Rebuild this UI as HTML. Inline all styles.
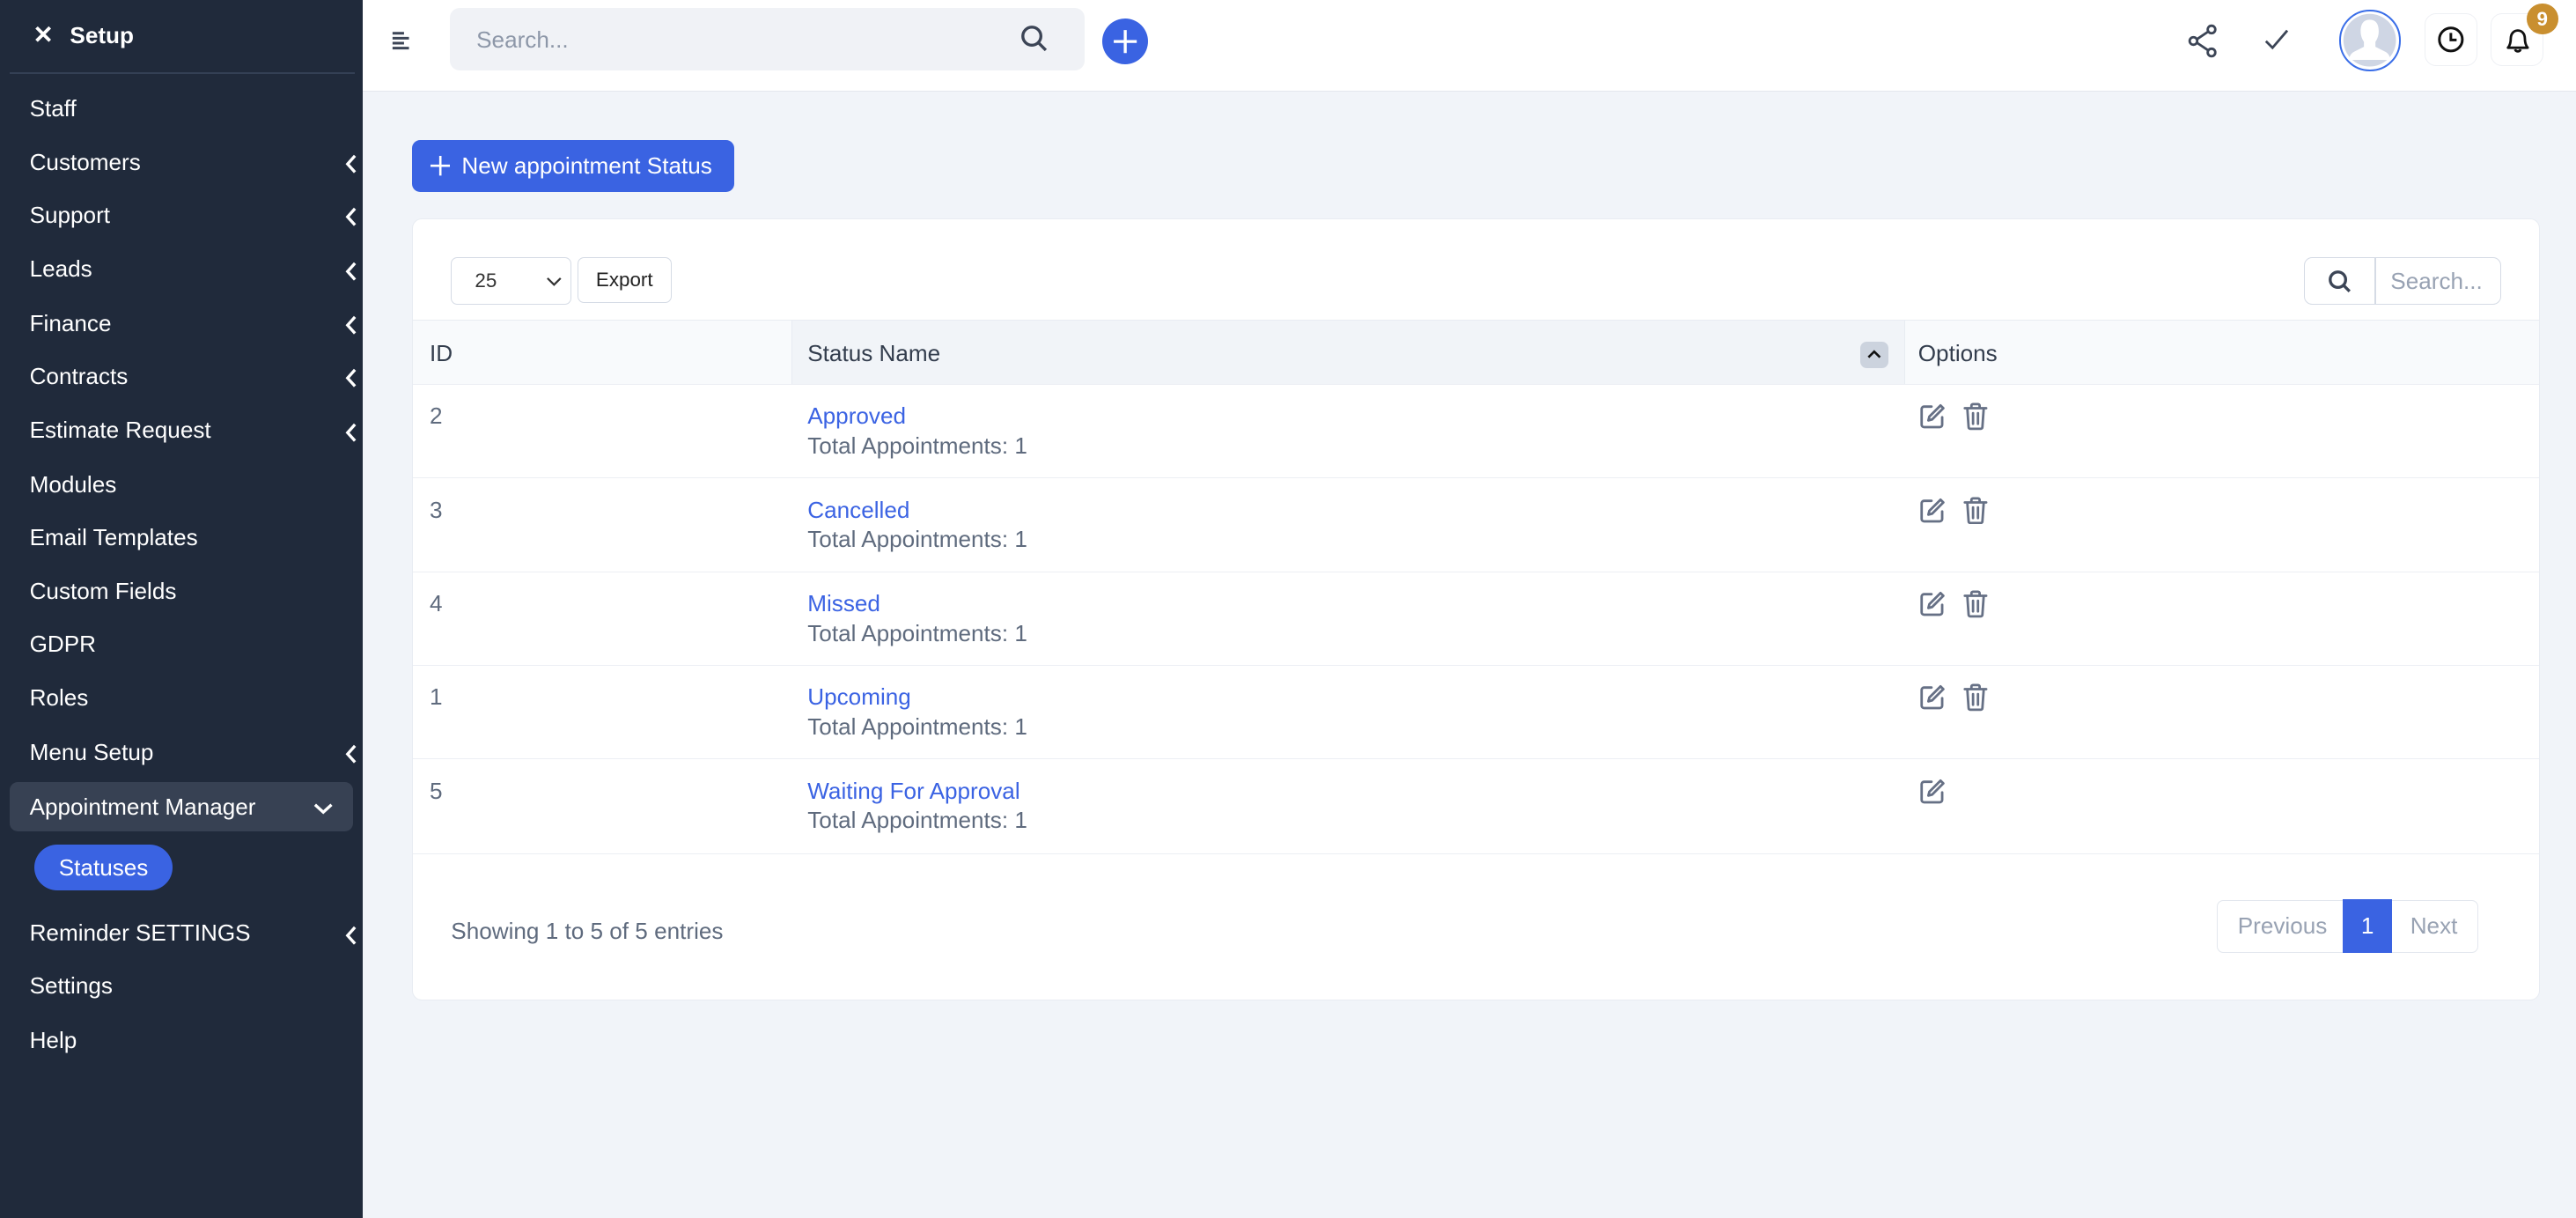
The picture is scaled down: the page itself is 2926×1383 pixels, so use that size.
<!DOCTYPE html>
<html><head><meta charset="utf-8">
<style>
html,body{margin:0;padding:0;}
body{width:2926px;height:1382px;overflow:hidden;background:#f1f4f9;font-family:"Liberation Sans",sans-serif;}
#z{zoom:1.8661;width:1568px;height:741px;position:relative;}
.abs{position:absolute;}
.sb{left:0;top:0;width:221px;height:741px;background:#202a3b;color:#fff;font-size:14px;}
.sb .it{position:absolute;left:18px;right:0;height:20px;line-height:20px;}
.sb .chev{position:absolute;left:192px;top:5px;}
.hdr{left:221px;top:0;right:0;height:55px;background:#fff;border-bottom:1px solid #e3e7ee;}
.card{left:251px;top:133px;width:1295px;height:476px;background:#fff;border-radius:6px;border:1px solid #e8ecf2;box-sizing:border-box;}
.row{position:absolute;left:0;right:0;height:57px;border-top:1px solid #eceff4;font-size:14px;color:#5f6b7e;}
.row .id{position:absolute;left:10px;top:11px;}
.row .nm{position:absolute;left:240px;top:11px;color:#3b63e3;}
.row .tot{position:absolute;left:240px;top:29px;}
.row .ic{position:absolute;left:916px;top:11px;}
</style></head><body><div id="z">

<div class="abs sb">
  <div class="it" style="top:11px;left:20px;font-weight:bold;"><span style="font-size:15px;margin-right:10px;">✕</span>Setup</div>
  <div style="position:absolute;left:6px;width:210px;top:44px;height:1px;background:#344055;"></div>
  <div class="it" style="top:56px">Staff</div>
  <div class="it" style="top:89px">Customers<svg class="chev" width="8" height="12" viewBox="0 0 8 12"><path d="M6 1L1.5 6L6 11" stroke="#fff" stroke-width="1.8" fill="none"/></svg></div>
  <div class="it" style="top:121px">Support<svg class="chev" width="8" height="12" viewBox="0 0 8 12"><path d="M6 1L1.5 6L6 11" stroke="#fff" stroke-width="1.8" fill="none"/></svg></div>
  <div class="it" style="top:154px">Leads<svg class="chev" width="8" height="12" viewBox="0 0 8 12"><path d="M6 1L1.5 6L6 11" stroke="#fff" stroke-width="1.8" fill="none"/></svg></div>
  <div class="it" style="top:187px">Finance<svg class="chev" width="8" height="12" viewBox="0 0 8 12"><path d="M6 1L1.5 6L6 11" stroke="#fff" stroke-width="1.8" fill="none"/></svg></div>
  <div class="it" style="top:219px">Contracts<svg class="chev" width="8" height="12" viewBox="0 0 8 12"><path d="M6 1L1.5 6L6 11" stroke="#fff" stroke-width="1.8" fill="none"/></svg></div>
  <div class="it" style="top:252px">Estimate Request<svg class="chev" width="8" height="12" viewBox="0 0 8 12"><path d="M6 1L1.5 6L6 11" stroke="#fff" stroke-width="1.8" fill="none"/></svg></div>
  <div class="it" style="top:285px">Modules</div>
  <div class="it" style="top:317px">Email Templates</div>
  <div class="it" style="top:350px">Custom Fields</div>
  <div class="it" style="top:382px">GDPR</div>
  <div class="it" style="top:415px">Roles</div>
  <div class="it" style="top:448px">Menu Setup<svg class="chev" width="8" height="12" viewBox="0 0 8 12"><path d="M6 1L1.5 6L6 11" stroke="#fff" stroke-width="1.8" fill="none"/></svg></div>
  <div style="position:absolute;left:6px;top:476px;width:209px;height:30px;background:#374153;border-radius:5px;"></div>
  <div class="it" style="top:481px">Appointment Manager<svg style="position:absolute;left:173px;top:7px" width="12" height="8" viewBox="0 0 12 8"><path d="M1 1.5L6 6L11 1.5" stroke="#fff" stroke-width="1.8" fill="none"/></svg></div>
  <div style="position:absolute;left:21px;top:514px;width:84px;height:28px;background:#3a63e2;border-radius:14px;text-align:center;line-height:28px;">Statuses</div>
  <div class="it" style="top:558px">Reminder SETTINGS<svg class="chev" width="8" height="12" viewBox="0 0 8 12"><path d="M6 1L1.5 6L6 11" stroke="#fff" stroke-width="1.8" fill="none"/></svg></div>
  <div class="it" style="top:590px">Settings</div>
  <div class="it" style="top:623px">Help</div>
</div>

<div class="abs hdr">
  <svg style="position:absolute;left:17px;top:19px" width="12" height="12" viewBox="0 0 12 12"><path d="M1 1.5h7M1 4.5h10M1 7.5h7M1 10.5h10" stroke="#3c4556" stroke-width="1.6"/></svg>
  <div style="position:absolute;left:53px;top:5px;width:386px;height:38px;background:#f0f2f6;border-radius:6px;">
    <span style="position:absolute;left:16px;top:11px;font-size:14px;color:#8d97a8;">Search...</span>
    <svg style="position:absolute;left:347px;top:10px" width="17" height="17" viewBox="0 0 17 17"><circle cx="7" cy="7" r="5.5" stroke="#3c4556" stroke-width="1.8" fill="none"/><path d="M11 11l4.5 4.5" stroke="#3c4556" stroke-width="1.8"/></svg>
  </div>
  <div style="position:absolute;left:450px;top:11px;width:28px;height:28px;border-radius:50%;background:#3a63e2;"><svg width="28" height="28" viewBox="0 0 28 28"><path d="M14 7v14M7 14h14" stroke="#fff" stroke-width="1.8"/></svg></div>
  <svg style="position:absolute;left:1110px;top:14px" width="20" height="22" viewBox="0 0 20 22"><circle cx="15" cy="4" r="2.3" stroke="#3c4556" stroke-width="1.5" fill="none"/><circle cx="4" cy="11" r="2.3" stroke="#3c4556" stroke-width="1.5" fill="none"/><circle cx="15" cy="18" r="2.3" stroke="#3c4556" stroke-width="1.5" fill="none"/><path d="M6 10L13 5.3M6 12L13 16.7" stroke="#3c4556" stroke-width="1.5"/></svg>
  <svg style="position:absolute;left:1157px;top:16px" width="16" height="16" viewBox="0 0 16 16"><path d="M1.5 9l4 4L14.5 2.5" stroke="#3c4556" stroke-width="1.5" fill="none"/></svg>
  <div style="position:absolute;left:1203px;top:6px;width:35px;height:35px;border-radius:50%;border:1.5px solid #3a6ee8;background:#fff;overflow:hidden;">
    <svg width="35" height="35" viewBox="0 0 35 35"><circle cx="17.5" cy="17.5" r="16" fill="#cfd6e4"/><path d="M17.5 5c-4 0-5.5 3-5.5 7 0 3 1 5 2 6.5v3l-6 3c-2 1-3 3-3 5h25c0-2-1-4-3-5l-6-3v-3c1-1.5 2-3.5 2-6.5 0-4-1.5-7-5.5-7z" fill="#fff"/></svg>
  </div>
  <div style="position:absolute;left:1255px;top:8px;width:32px;height:32px;border:1px solid #eef0f4;border-radius:7px;box-sizing:border-box;"><svg style="position:absolute;left:7px;top:7px" width="17" height="17" viewBox="0 0 17 17"><circle cx="8.5" cy="8.5" r="7" stroke="#111" stroke-width="1.6" fill="none"/><path d="M8.5 4.5v4.3h3.5" stroke="#111" stroke-width="1.6" fill="none"/></svg></div>
  <div style="position:absolute;left:1295px;top:8px;width:32px;height:32px;border:1px solid #eef0f4;border-radius:7px;box-sizing:border-box;"><svg style="position:absolute;left:8px;top:7px" width="16" height="18" viewBox="0 0 16 18"><path d="M2 13.5h12c-1.3-1.5-1.7-3-1.7-5.5 0-3-1.8-5-4.3-5S3.7 5 3.7 8c0 2.5-.4 4-1.7 5.5z" stroke="#111" stroke-width="1.5" fill="none" stroke-linejoin="round"/><path d="M6.3 14.5a1.8 1.8 0 003.4 0" stroke="#111" stroke-width="1.5" fill="none"/></svg></div>
  <div style="position:absolute;left:1317px;top:2px;width:19px;height:19px;border-radius:50%;background:#c98f2f;color:#fff;font-size:12px;font-weight:bold;text-align:center;line-height:19px;">9</div>
</div>

<div class="abs" style="left:251px;top:85px;width:196px;height:32px;background:#3a63e2;border-radius:5px;color:#fff;font-size:14px;line-height:32px;">
  <svg style="position:absolute;left:11px;top:10px" width="12" height="12" viewBox="0 0 12 12"><path d="M6 0v12M0 6h12" stroke="#fff" stroke-width="1.4"/></svg>
  <span style="position:absolute;left:30px;">New appointment Status</span>
</div>

<div class="abs card">
  <div style="position:absolute;left:23px;top:23px;width:72px;height:28px;border:1px solid #d5dbe5;border-radius:4px;font-size:12px;color:#333;">
    <span style="position:absolute;left:14px;top:7px;">25</span>
    <svg style="position:absolute;left:57px;top:11px" width="10" height="6" viewBox="0 0 10 6"><path d="M1 1l4 4 4-4" stroke="#333" stroke-width="1.2" fill="none"/></svg>
  </div>
  <div style="position:absolute;left:100px;top:23px;width:56px;height:27px;border:1px solid #d5dbe5;border-radius:4px;font-size:12px;color:#222;text-align:center;line-height:27px;">Export</div>
  <div style="position:absolute;left:1151px;top:23px;width:119px;height:28px;border:1px solid #d5dbe5;border-radius:5px;">
    <div style="position:absolute;left:42px;top:0;width:1px;height:28px;background:#d5dbe5;"></div>
    <svg style="position:absolute;left:14px;top:7px" width="15" height="15" viewBox="0 0 15 15"><circle cx="6.2" cy="6.2" r="4.7" stroke="#3c4556" stroke-width="1.8" fill="none"/><path d="M9.7 9.7l3.6 3.6" stroke="#3c4556" stroke-width="1.8"/></svg>
    <span style="position:absolute;left:52px;top:6px;font-size:14px;color:#98a2b3;">Search...</span>
  </div>
  <div style="position:absolute;left:0;right:0;top:61px;height:39px;background:#f8fafc;border-top:1px solid #e8ecf2;font-size:14px;color:#333d4d;">
    <div style="position:absolute;left:230px;top:0;width:677px;height:39px;background:#f1f4f8;border-left:1px solid #e8ecf2;border-right:1px solid #e8ecf2;"></div>
    <span style="position:absolute;left:10px;top:12px;">ID</span>
    <span style="position:absolute;left:240px;top:12px;">Status Name</span>
    <div style="position:absolute;left:881px;top:13px;width:17px;height:16px;background:#ccd3de;border-radius:4px;"><svg width="17" height="16" viewBox="0 0 17 16"><path d="M5 9.5l3.5-3.5 3.5 3.5" stroke="#111" stroke-width="1.4" fill="none"/></svg></div>
    <span style="position:absolute;left:916px;top:12px;">Options</span>
  </div>
  <div class="row" style="top:100px"><span class="id">2</span><span class="nm">Approved</span><span class="tot">Total Appointments: 1</span><span class="ic">ICONS</span></div>
  <div class="row" style="top:157px"><span class="id">3</span><span class="nm">Cancelled</span><span class="tot">Total Appointments: 1</span><span class="ic">ICONS</span></div>
  <div class="row" style="top:214px"><span class="id">4</span><span class="nm">Missed</span><span class="tot">Total Appointments: 1</span><span class="ic">ICONS</span></div>
  <div class="row" style="top:271px"><span class="id">1</span><span class="nm">Upcoming</span><span class="tot">Total Appointments: 1</span><span class="ic">ICONS</span></div>
  <div class="row" style="top:328px;border-bottom:1px solid #eceff4;"><span class="id">5</span><span class="nm">Waiting For Approval</span><span class="tot">Total Appointments: 1</span><span class="ic">EDIT</span></div>
  <span style="position:absolute;left:23px;top:425px;font-size:14px;color:#5f6b7e;">Showing 1 to 5 of 5 entries</span>
  <div style="position:absolute;left:1098px;top:414px;width:158px;height:31px;border:1px solid #e3e7ee;border-radius:4px;font-size:14px;color:#98a2b3;">
    <span style="position:absolute;left:12px;top:7px;">Previous</span>
    <div style="position:absolute;left:76px;top:-1px;width:30px;height:33px;background:#3a63e2;color:#fff;text-align:center;line-height:33px;">1</div>
    <span style="position:absolute;left:117px;top:7px;">Next</span>
  </div>
</div>
</div>
<script>
var e='<svg width="17" height="17" viewBox="0 0 17 17" style="vertical-align:top"><path d="M8 2.5H3.5a1.5 1.5 0 00-1.5 1.5v9.5a1.5 1.5 0 001.5 1.5H13a1.5 1.5 0 001.5-1.5V9" stroke="#667085" stroke-width="1.5" fill="none" stroke-linecap="round"/><path d="M13.5 1.8l1.7 1.7-6.8 6.8-2.3.6.6-2.3z" stroke="#667085" stroke-width="1.5" fill="none" stroke-linejoin="round"/></svg>';
var t='<svg width="16" height="17" viewBox="0 0 16 17" style="vertical-align:top;margin-left:10px"><path d="M1.5 3.5h13M5.5 3.5V2a1 1 0 011-1h3a1 1 0 011 1v1.5M3 3.5l.8 11.5a1 1 0 001 1h6.4a1 1 0 001-1L13 3.5M6.5 6.5v6.5M9.5 6.5v6.5" stroke="#667085" stroke-width="1.5" fill="none" stroke-linecap="round"/></svg>';
document.querySelectorAll('.ic').forEach(function(x){x.innerHTML=x.textContent=='EDIT'?e:e+t;});
</script>
</body></html>
